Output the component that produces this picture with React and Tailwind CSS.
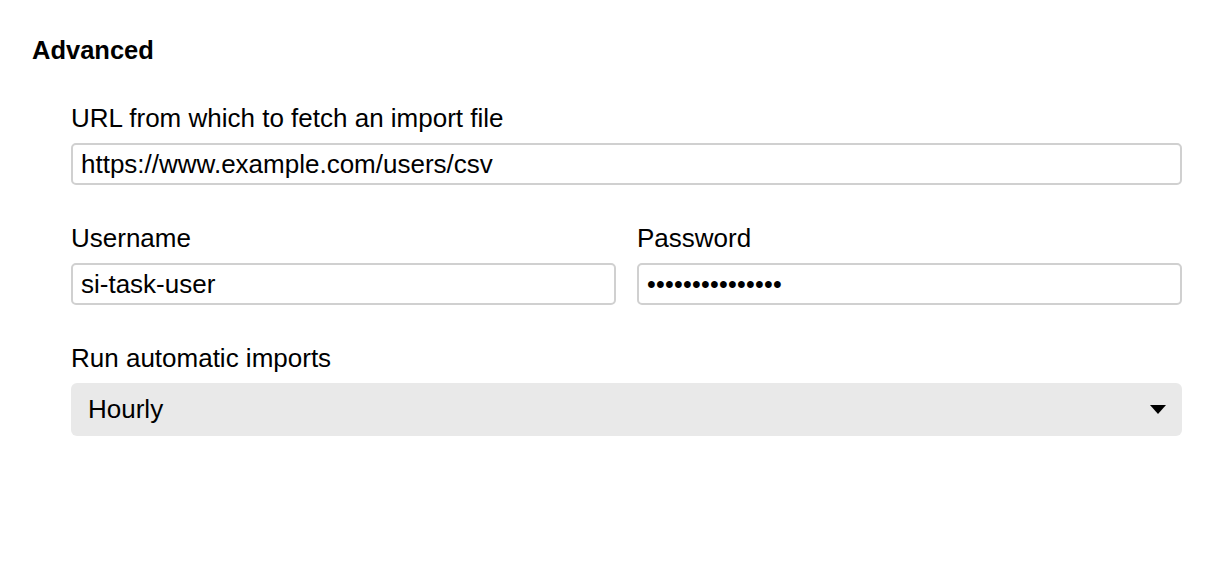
// Advanced import settings form

const labelCls = "block text-[26px] leading-[30px] text-black mb-[10px]";
const inputCls =
  "block w-full h-[42px] border-2 border-[#d0d0d0] rounded-[5px] bg-white px-[8px] text-[26px] text-black outline-none";

function Field({ label, children }) {
  return (
    <label className="block">
      <span className={labelCls}>{label}</span>
      {children}
    </label>
  );
}

export default function App() {
  return (
    <div
      className="w-[1220px] h-[574px] bg-white pl-[32px] pt-[35px]"
      style={{ fontFamily: '"Liberation Sans", Arial, sans-serif' }}
    >
      <h2 className="text-[25.5px] leading-[30px] font-bold text-black">Advanced</h2>

      <div className="ml-[39px] w-[1111px] mt-[38px] flex flex-col gap-[38px]">
        <Field label="URL from which to fetch an import file">
          <input
            className={inputCls}
            readOnly
            defaultValue="https://www.example.com/users/csv"
          />
        </Field>

        <div className="grid grid-cols-2 gap-[21px]">
          <Field label="Username">
            <input className={inputCls} readOnly defaultValue="si-task-user" />
          </Field>
          <Field label="Password">
            <div className={inputCls + " flex items-center"}>
              <span className="text-[25px] leading-none tracking-[0.25px]">•••••••••••••••</span>
            </div>
          </Field>
        </div>

        <div>
          <span className="block text-[26px] leading-[30px] text-black mb-[10px]">
            Run automatic imports
          </span>
          <div className="h-[53px] rounded-[6px] bg-[#e9e9e9] flex items-center justify-between pl-[17px] pr-[16px]">
            <span className="text-[26px] text-black">Hourly</span>
            <svg width="16" height="9" viewBox="0 0 16 9">
              <path d="M0 0 H16 L8 9 Z" fill="#000" />
            </svg>
          </div>
        </div>
      </div>
    </div>
  );
}
